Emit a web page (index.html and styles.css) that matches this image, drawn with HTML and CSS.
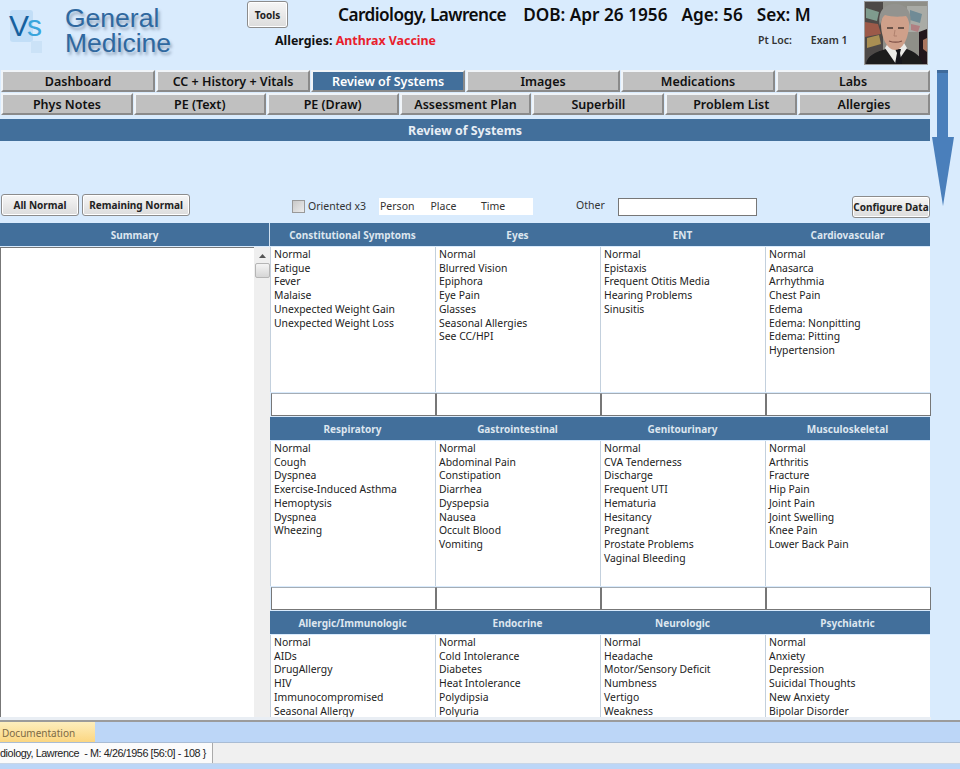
FILE: index.html
```
<!DOCTYPE html>
<html lang="en">
<head>
<meta charset="UTF-8">
<meta name="viewport" content="width=device-width, initial-scale=1.0">
<title>General Medicine - Review of Systems</title>
<link rel="stylesheet" href="styles.css">
</head>
<body>
<div class="page">
  <div class="content">
    <header class="top">
      <div class="logo">
        <div class="vs-mark">
          <span class="square square-big"></span>
          <span class="square square-small"></span>
          <span class="vs-text"><span class="vs-v">V</span><span class="vs-s">s</span></span>
        </div>
        <div class="logo-name">General<br>Medicine</div>
      </div>
      <button class="btn tools-btn">Tools</button>
      <div class="patient">
        <div class="patient-line">
          <span class="patient-name">Cardiology, Lawrence</span>
          <span>DOB: Apr 26 1956</span>
          <span>Age: 56</span>
          <span>Sex: M</span>
        </div>
        <div class="patient-sub">
          <div class="allergies">Allergies: <span class="red">Anthrax Vaccine</span></div>
          <div class="location"><span>Pt Loc:</span><span>Exam 1</span></div>
        </div>
      </div>
      <div class="photo">
        <svg viewBox="0 0 62 62" width="62" height="62">
          <defs><filter id="soft"><feGaussianBlur stdDeviation="0.7"/></filter></defs>
          <g filter="url(#soft)">
            <rect width="62" height="62" fill="#8f8f88"/>
            <rect x="0" y="0" width="18" height="62" fill="#4d4a46"/>
            <path d="M1 6l13 4-2 9-11-3z" fill="#7f9c8e"/>
            <path d="M0 20l13 2 3 10-16 3z" fill="#9c5a4a"/>
            <path d="M2 36l12-3 2 9-14 4z" fill="#a98f52"/>
            <rect x="42" y="4" width="20" height="26" fill="#a9aba6"/>
            <path d="M45 8l12 4-2 9-10-3z" fill="#6f8b96"/>
            <path d="M46 22l9 2-2 6-7-2z" fill="#b07f82"/>
            <path d="M54 30l8-3v35h-8z" fill="#22171a"/>
            <path d="M58 38l4-2v14l-4-3z" fill="#a9745f"/>
            <path d="M1 62c1-8 9-12 20-15l10 3 11-3c8 3 14 7 16 15z" fill="#1b1a1f"/>
            <path d="M20 46l11 16 11-16-3-5H23z" fill="#ecece9"/>
            <path d="M30 47h6l-1 4 2 11h-7l2-11z" fill="#17171a"/>
            <path d="M16 22c0-11 6-15 14-15s14 4 14 15c0 13-6 26-14 26s-14-13-14-26z" fill="#cfa08a"/>
            <path d="M15 24c-3-14 4-22 15-22s18 8 15 22c-1-4-2-8-4-10-6 1-15 1-21-1-3 2-4 7-5 11z" fill="#93938f"/>
            <path d="M22 26h6M33 26h6" stroke="#4b3a34" stroke-width="1.300"/>
            <path d="M30 28l-1 6h3" stroke="#a87a66" stroke-width="0.800" fill="none"/>
            <path d="M24 39c4 1.500 9 1.500 13 0" stroke="#7d4f45" stroke-width="1.300" fill="none"/>
          </g>
        </svg>
      </div>
    </header>

    <nav class="tabs">
      <div class="tab-row">
        <a class="tab">Dashboard</a>
        <a class="tab">CC + History + Vitals</a>
        <a class="tab active">Review of Systems</a>
        <a class="tab">Images</a>
        <a class="tab">Medications</a>
        <a class="tab">Labs</a>
      </div>
      <div class="tab-row">
        <a class="tab">Phys Notes</a>
        <a class="tab">PE (Text)</a>
        <a class="tab">PE (Draw)</a>
        <a class="tab">Assessment Plan</a>
        <a class="tab">Superbill</a>
        <a class="tab">Problem List</a>
        <a class="tab">Allergies</a>
      </div>
    </nav>

    <div class="page-title">Review of Systems</div>

    <div class="toolbar">
      <button class="btn all-normal">All Normal</button>
      <button class="btn remaining">Remaining Normal</button>
      <label class="oriented"><span class="checkbox"></span>Oriented x3</label>
      <div class="oriented-box"><span>Person</span><span>Place</span><span>Time</span></div>
      <span class="other-label">Other</span>
      <div class="other-input"></div>
      <button class="btn configure">Configure Data</button>
    </div>

    <main class="ros">
      <section class="summary">
        <div class="col-head">Summary</div>
        <div class="summary-body">
          <div class="summary-text"></div>
          <div class="scrollbar">
            <svg class="scroll-arrow" viewBox="0 0 7 4" width="7" height="4"><path d="M3.500 0L7 4H0z" fill="#555"/></svg>
            <div class="scroll-thumb"></div>
          </div>
        </div>
      </section>

      <div class="systems">
        <div class="col-head">Constitutional Symptoms</div>
        <div class="col-head">Eyes</div>
        <div class="col-head">ENT</div>
        <div class="col-head">Cardiovascular</div>
        <ul class="sym-list">
          <li>Normal</li><li>Fatigue</li><li>Fever</li><li>Malaise</li><li>Unexpected Weight Gain</li><li>Unexpected Weight Loss</li>
        </ul>
        <ul class="sym-list">
          <li>Normal</li><li>Blurred Vision</li><li>Epiphora</li><li>Eye Pain</li><li>Glasses</li><li>Seasonal Allergies</li><li>See CC/HPI</li>
        </ul>
        <ul class="sym-list">
          <li>Normal</li><li>Epistaxis</li><li>Frequent Otitis Media</li><li>Hearing Problems</li><li>Sinusitis</li>
        </ul>
        <ul class="sym-list">
          <li>Normal</li><li>Anasarca</li><li>Arrhythmia</li><li>Chest Pain</li><li>Edema</li><li>Edema: Nonpitting</li><li>Edema: Pitting</li><li>Hypertension</li>
        </ul>
        <div class="note"></div><div class="note"></div><div class="note"></div><div class="note"></div>

        <div class="col-head">Respiratory</div>
        <div class="col-head">Gastrointestinal</div>
        <div class="col-head">Genitourinary</div>
        <div class="col-head">Musculoskeletal</div>
        <ul class="sym-list">
          <li>Normal</li><li>Cough</li><li>Dyspnea</li><li>Exercise-Induced Asthma</li><li>Hemoptysis</li><li>Dyspnea</li><li>Wheezing</li>
        </ul>
        <ul class="sym-list">
          <li>Normal</li><li>Abdominal Pain</li><li>Constipation</li><li>Diarrhea</li><li>Dyspepsia</li><li>Nausea</li><li>Occult Blood</li><li>Vomiting</li>
        </ul>
        <ul class="sym-list">
          <li>Normal</li><li>CVA Tenderness</li><li>Discharge</li><li>Frequent UTI</li><li>Hematuria</li><li>Hesitancy</li><li>Pregnant</li><li>Prostate Problems</li><li>Vaginal Bleeding</li>
        </ul>
        <ul class="sym-list">
          <li>Normal</li><li>Arthritis</li><li>Fracture</li><li>Hip Pain</li><li>Joint Pain</li><li>Joint Swelling</li><li>Knee Pain</li><li>Lower Back Pain</li>
        </ul>
        <div class="note"></div><div class="note"></div><div class="note"></div><div class="note"></div>

        <div class="col-head">Allergic/Immunologic</div>
        <div class="col-head">Endocrine</div>
        <div class="col-head">Neurologic</div>
        <div class="col-head">Psychiatric</div>
        <ul class="sym-list">
          <li>Normal</li><li>AIDs</li><li>DrugAllergy</li><li>HIV</li><li>Immunocompromised</li><li>Seasonal Allergy</li>
        </ul>
        <ul class="sym-list">
          <li>Normal</li><li>Cold Intolerance</li><li>Diabetes</li><li>Heat Intolerance</li><li>Polydipsia</li><li>Polyuria</li>
        </ul>
        <ul class="sym-list">
          <li>Normal</li><li>Headache</li><li>Motor/Sensory Deficit</li><li>Numbness</li><li>Vertigo</li><li>Weakness</li>
        </ul>
        <ul class="sym-list">
          <li>Normal</li><li>Anxiety</li><li>Depression</li><li>Suicidal Thoughts</li><li>New Anxiety</li><li>Bipolar Disorder</li>
        </ul>
      </div>
    </main>
  </div>

  <div class="arrow-col">
    <svg viewBox="0 0 22 136" width="22" height="136">
      <rect x="5" y="0" width="11" height="67" fill="#4a7fbb"/>
      <rect x="5" y="0" width="11" height="3" fill="#3f6a9b"/>
      <path d="M0 67H22L11 136z" fill="#4a7fbb"/>
    </svg>
  </div>
</div>

<footer class="footer">
  <div class="doc-bar"><div class="doc-tab">Documentation</div></div>
  <div class="status-bar"><div class="status-cell">diology, Lawrence &nbsp;- M: 4/26/1956 [56:0] - 108 }</div></div>
  <div class="bottom-strip"></div>
</footer>
</body>
</html>
```

FILE: styles.css
```
html, body {
  margin: 0;
  height: 100%;
}

body {
  display: flex;
  flex-direction: column;
  height: 769px;
  overflow: hidden;
  background-color: #d9ebfd;
  font-family: "Noto Sans", Tahoma, sans-serif;
  color: #111;
}

.page {
  flex: 1;
  display: flex;
  min-height: 0;
}

.content {
  width: 931px;
  display: flex;
  flex-direction: column;
  min-height: 0;
}

.arrow-col {
  padding: 70px 0 0 1px;
}

/* header */
.top {
  height: 70px;
  display: flex;
  align-items: flex-start;
}

.logo {
  width: 247px;
  display: flex;
  padding-top: 5px;
  box-sizing: border-box;
}

.vs-mark {
  position: relative;
  width: 65px;
  height: 50px;
}

.square {
  position: absolute;
  background-color: #c2def7;
}

.square-big {
  left: 10px;
  top: 5px;
  width: 23px;
  height: 32px;
  border-radius: 3px;
}

.square-small {
  left: 31px;
  top: 36px;
  width: 11px;
  height: 12px;
  background-color: #cbe2f7;
}

.vs-text {
  position: absolute;
  left: 9px;
  top: 3px;
  font-family: "Liberation Sans", Arial, sans-serif;
  font-size: 30px;
  line-height: 36px;
  letter-spacing: -2px;
}

.vs-v {
  color: #15619f;
}

.vs-s {
  color: #3aa5dc;
}

.logo-name {
  font-family: "Liberation Sans", Arial, sans-serif;
  font-size: 26.500px;
  line-height: 25px;
  color: #2f689f;
  text-shadow: 2px 3px 3px rgba(70, 90, 120, 0.45);
  margin-top: 1px;
}

.btn {
  font-family: "Noto Sans", Tahoma, sans-serif;
  font-size: 10px;
  font-weight: bold;
  color: #222;
  padding: 0;
  height: 22px;
  background: linear-gradient(#f6f6f6, #dcdcdc);
  border: 1px solid #8c8c8c;
  border-radius: 3px;
  box-shadow: inset 0 0 0 1px #fff;
}

.tools-btn {
  width: 41px;
  height: 27px;
  margin-top: 1px;
}

.patient {
  width: 576px;
  box-sizing: border-box;
  padding: 3px 0 0 50px;
}

.patient-line {
  display: flex;
  gap: 14px;
  font-size: 17.200px;
  font-weight: 600;
  line-height: 24px;
  color: #0d0d0d;
}

.patient-name {
  letter-spacing: -0.550px;
  margin-right: 3px;
}

.patient-sub {
  display: flex;
  justify-content: space-between;
  margin: 3px 0 0 -63px;
}

.allergies {
  font-size: 12.400px;
  font-weight: 700;
  line-height: 21px;
}

.red {
  color: #e8202c;
}

.location {
  display: flex;
  gap: 19px;
  width: 100px;
  font-size: 10.500px;
  font-weight: 600;
  line-height: 21px;
  color: #333;
  margin-right: 6px;
}

.photo {
  width: 62px;
  height: 62px;
  margin-top: 1px;
  border: 1px solid #9c9c9c;
  background-color: #888;
}

.photo svg {
  display: block;
}

/* tabs */
.tabs {
  display: flex;
  flex-direction: column;
  gap: 1px;
  padding-left: 1px;
  width: 929px;
}

.tab-row {
  display: flex;
  gap: 1px;
  height: 22px;
}

.tab {
  flex: 1;
  box-sizing: border-box;
  text-align: center;
  background-color: #c0c0c0;
  border: 2px solid;
  border-color: #f0f4f8 #8a8a8a #8a8a8a #f0f4f8;
  font-size: 12.500px;
  font-weight: 600;
  line-height: 20px;
  color: #111;
  overflow: hidden;
}

.tab.active {
  background-color: #426f9b;
  color: #fff;
}

.page-title {
  margin-top: 4px;
  height: 22px;
  width: 930px;
  background-color: #426f9b;
  color: #e8eef5;
  text-align: center;
  font-size: 12.400px;
  font-weight: 700;
  line-height: 24px;
}

/* toolbar */
.toolbar {
  height: 82px;
  box-sizing: border-box;
  display: flex;
  align-items: flex-start;
  padding: 53px 0 0 1px;
  font-size: 10.500px;
}

.all-normal {
  width: 78px;
}

.remaining {
  width: 108px;
  margin-left: 3px;
}

.oriented {
  display: flex;
  align-items: center;
  margin: 3px 0 0 102px;
  width: 87px;
  height: 18px;
  color: #333;
}

.checkbox {
  width: 11px;
  height: 11px;
  margin-right: 3px;
  border: 1px solid #999;
  background: linear-gradient(135deg, #c8c8c8, #ececec);
}

.oriented-box {
  display: flex;
  width: 154px;
  height: 17px;
  margin-top: 4px;
  padding-left: 1px;
  box-sizing: border-box;
  background-color: #fff;
  line-height: 17px;
  color: #333;
}

.oriented-box span {
  width: 50.500px;
}

.other-label {
  margin: 4px 0 0 43px;
  width: 42px;
  color: #333;
}

.other-input {
  width: 137px;
  height: 16px;
  margin-top: 4px;
  background-color: #fff;
  border: 1px solid #777;
}

.configure {
  width: 78px;
  margin: 2px 0 0 95px;
}

/* grid of systems */
.ros {
  flex: 1;
  display: flex;
  min-height: 0;
  overflow: hidden;
  border-bottom: 3px solid #e9eef4;
}

.summary {
  width: 270px;
  display: flex;
  flex-direction: column;
}

.col-head {
  height: 23px;
  overflow: hidden;
  background-color: #426f9b;
  color: #dde6ef;
  text-align: center;
  font-size: 10px;
  font-weight: 700;
  line-height: 25px;
}

.summary .col-head {
  border-right: 1px solid #cfe0f0;
}

.summary-body {
  flex: 1;
  display: flex;
  margin-top: 1px;
}

.summary-text {
  flex: 1;
  background-color: #fff;
  border: 1px solid #777;
  border-bottom: none;
  border-right: none;
}

.scrollbar {
  width: 16px;
  background-color: #efefef;
  display: flex;
  flex-direction: column;
  align-items: center;
}

.scroll-arrow {
  margin-top: 7px;
}

.scroll-thumb {
  width: 13px;
  height: 13px;
  margin-top: 5px;
  background: linear-gradient(#f4f4f4, #d6d6d6);
  border: 1px solid #b5b5b5;
  border-radius: 2px;
}

.systems {
  width: 660px;
  display: grid;
  grid-template-columns: repeat(4, 165px);
  grid-template-rows: 23px 145px 23px 23px 145px 23px 23px 1fr;
  row-gap: 1px;
  align-content: start;
}

.sym-list {
  list-style-type: none;
  margin: 0;
  padding: 1px 0 0 3px;
  overflow: hidden;
  background-color: #fff;
  border-left: 1px solid #c3d0dd;
  font-size: 10.400px;
  line-height: 13.700px;
  color: #222;
}

.note {
  margin: 0 -1px 0 1px;
  background-color: #fff;
  box-sizing: border-box;
  border: 1px solid #777;
  border-top-color: #a5adb5;
}

/* bottom of the window */
.footer {
  flex: none;
  height: 49px;
  border-top: 2px solid #9b9b9b;
  box-sizing: border-box;
}

.doc-bar {
  height: 21px;
  background-color: #bcd6f7;
  border-bottom: 1px solid #a9bcd4;
  box-sizing: border-box;
}

.doc-tab {
  width: 95px;
  height: 20px;
  box-sizing: border-box;
  padding-left: 2px;
  background: linear-gradient(#fdeebd, #fbd681);
  color: #7c6a45;
  font-size: 10px;
  line-height: 23px;
  overflow: hidden;
}

.status-bar {
  height: 21px;
  background-color: #f0f0f0;
  border-bottom: 1px solid #c9d6e6;
  box-sizing: border-box;
}

.status-cell {
  display: inline-block;
  vertical-align: top;
  height: 20px;
  box-sizing: border-box;
  padding-right: 6px;
  background-color: #fbfbfb;
  border-right: 1px solid #aaa;
  font-family: "Liberation Sans", Arial, sans-serif;
  font-size: 10.800px;
  letter-spacing: -0.420px;
  line-height: 20px;
  color: #222;
}

.bottom-strip {
  height: 5px;
  background-color: #bcd6f7;
}
```
